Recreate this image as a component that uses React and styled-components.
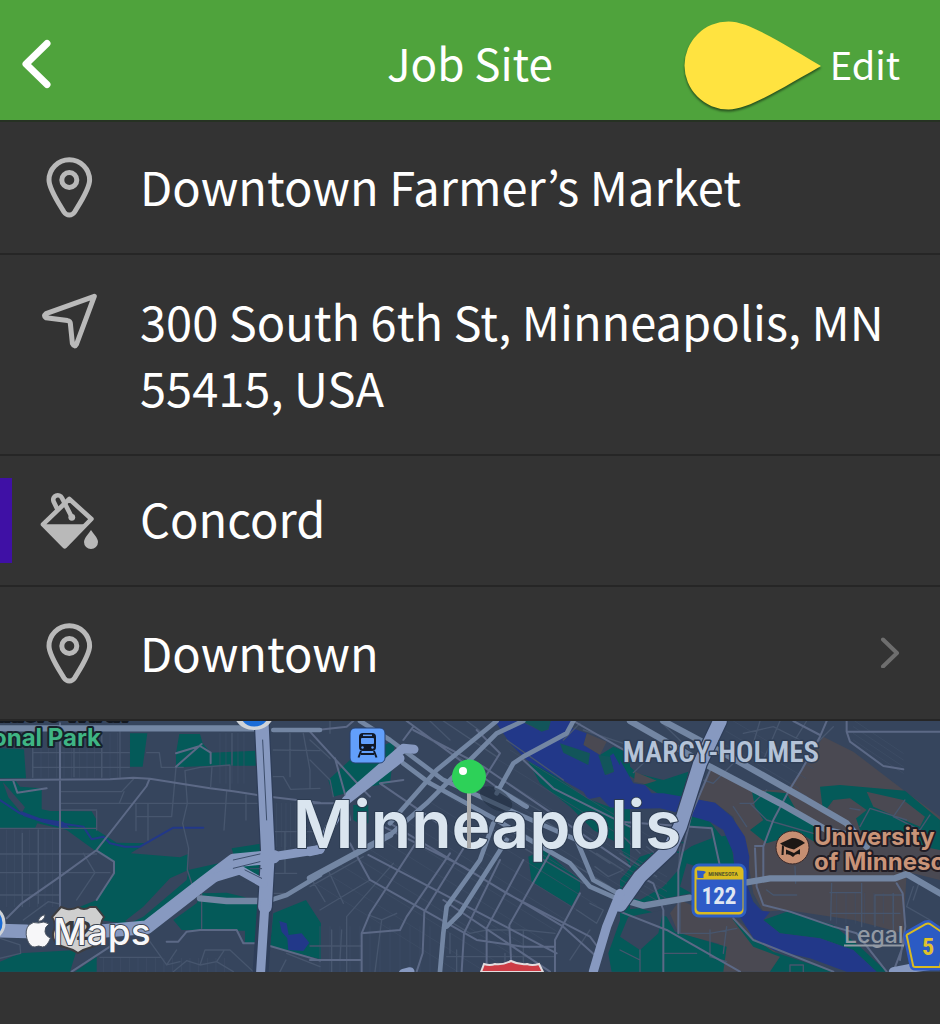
import React from "react";
import styled, { createGlobalStyle } from "styled-components";

const GlobalStyle = createGlobalStyle`
  * { box-sizing: border-box; }
  body {
    margin: 0;
    background: #333333;
    color: #ffffff;
    font-family: "Noto Sans CJK JP", "Noto Sans CJK SC", "Noto Sans", sans-serif;
  }
`;

const Screen = styled.main`
  min-height: 100vh;
  background: #333333;
`;

const Header = styled.header`
  display: grid;
  grid-template-columns: 1fr auto 1fr;
  align-items: center;
  height: 122px;
  padding: 8px 40px 0 20px;
  background: #4fa33c;
  border-bottom: 2px solid #263123;
`;

const Title = styled.h1`
  margin: 0 0 4px 20px;
  font-size: 44px;
  line-height: 64px;
  font-weight: 400;
`;

const HeaderButton = styled.button`
  display: flex;
  align-items: center;
  padding: 0;
  border: 0;
  background: none;
  color: inherit;
  font: inherit;
  font-size: 38px;
  line-height: 56px;
  cursor: pointer;
`;

const Actions = styled.div`
  display: flex;
  align-items: center;
  justify-content: flex-end;
  gap: 8px;
`;

const Marker = styled.svg`
  display: block;
  flex: none;
  margin-top: 4px;
  filter: drop-shadow(0 2px 1px rgba(0, 0, 0, 0.5));
`;

const List = styled.ul`
  margin: 0;
  padding: 0;
  list-style: none;
`;

const Row = styled.li`
  position: relative;
  display: flex;
  align-items: flex-start;
  padding: ${(p) => p.$top}px 40px 34px 37px;
  border-bottom: 2px solid #262626;
`;

const ColorTag = styled.span`
  position: absolute;
  left: 0;
  top: 22px;
  bottom: 22px;
  width: 12px;
  background: #3f10a5;
`;

const IconSlot = styled.span`
  display: flex;
  flex: none;
  align-items: center;
  width: 103px;
  height: 66px;
  color: #b9b9b9;
`;

const RowText = styled.span`
  flex: 1;
  font-size: 47px;
  line-height: 66px;
`;

const ChevronSlot = styled.span`
  display: flex;
  align-items: center;
  height: 66px;
`;

const MapFrame = styled.section`
  background: #36455d;
`;

const MapDrawing = styled.svg`
  display: block;
  width: 100%;
  height: auto;
`;

const MapText = styled.text`
  font-family: Inter, "Liberation Sans", sans-serif;
  font-size: ${(p) => p.$size}px;
  font-weight: ${(p) => p.$weight || 600};
  fill: ${(p) => p.$fill};
  stroke: ${(p) => p.$halo || "none"};
  stroke-width: ${(p) => p.$haloWidth || 0}px;
  stroke-linejoin: round;
  paint-order: stroke;
`;

const NarrowText = styled(MapText)`
  font-family: "Roboto Condensed", "Liberation Sans Narrow", "Liberation Sans", sans-serif;
`;

function PinIcon() {
  return (
    <svg width="64" height="64" viewBox="0 -1 64 64" fill="none" stroke="currentColor" strokeWidth="5" aria-hidden="true">
      <path d="M12 25A20.3 20.3 0 0 1 52.6 25C52.6 34 43 48 37.6 57C35 61 29.6 61 27 57C21.6 48 12 34 12 25Z" />
      <circle cx="32.3" cy="25" r="7.5" />
    </svg>
  );
}

function ArrowIcon() {
  return (
    <svg width="64" height="64" viewBox="0 0 64 64" fill="none" stroke="currentColor" strokeWidth="5" strokeLinejoin="round" aria-hidden="true">
      <path d="M57.3 7.3L9 24.6Q6 27 9 28.7L30.5 31.6Q33 32 33.3 34L35.4 54.5Q37.5 59 39.6 55Z" />
    </svg>
  );
}

function BucketIcon() {
  return (
    <svg width="64" height="66" viewBox="0 0 64 66" fill="none" stroke="currentColor" strokeWidth="4.6" strokeLinejoin="round" strokeLinecap="round" aria-hidden="true">
      <path d="M32.3 14L6 39.4L27.7 61.3L54.4 34Z" />
      <path d="M4.5 39.3H50L27.7 62.5Z" fill="currentColor" stroke="none" />
      <path d="M20 23.5L16.6 16.5C14.5 10.5 22.5 8 25 13L34.7 32" />
      <circle cx="34.8" cy="32.3" r="3.4" fill="currentColor" stroke="none" />
      <path d="M54 45C56 48.5 61 53 61 57A7 7 0 0 1 47 57C47 53 52 48.5 54 45Z" fill="currentColor" stroke="none" />
    </svg>
  );
}

// The map is charted in three side-by-side sheets drawn at three times scale.
const SHEETS = [0, 310, 620];

function parallels(x1, y1, x2, y2, dx, dy, count) {
  let d = "";
  for (let i = 0; i < count; i += 1) {
    d += `M${x1 + dx * i} ${y1 + dy * i}L${x2 + dx * i} ${y2 + dy * i}`;
  }
  return d;
}

const LAYERS = [
  {
    fill: "#4a4952",
    paths: [
      "",
      "",
      "M610 50L700 95L850 210L960 290V480L860 455L850 640L700 600L500 570L430 575L400 520L380 400L340 290L285 248L235 240L275 140L395 210L500 210L545 150ZM180 540L225 560L340 590L460 690L485 710L450 755H230L240 700L300 672L175 640L150 580Z",
    ],
  },
  {
    fill: "#045a59",
    paths: [
      "M0 85L72 88L78 175L0 175ZM390 40H442L428 140H390ZM538 42H600L608 70L632 98L768 92V137H632L528 142V100ZM0 183L45 180L60 200L125 205V268L150 273L275 274L290 300V330L350 368L440 370L392 400L540 412L565 402V450L655 430L620 470L460 610L400 615L300 600L240 560L290 540L342 460V425L290 395L200 330L112 310L105 325H0ZM695 385L790 370L800 480L720 470ZM605 520L680 518L730 530L780 550V670H735V632L600 630H545L520 600L590 550ZM820 580L918 540L963 610V718L810 680ZM0 725L60 700L230 690L210 755H0ZM225 755L290 710V755Z",
      "M55 180L120 120L235 70L255 65L240 190L175 200L70 230ZM130 255H175V310L150 312L130 300ZM650 115L740 170L830 235L900 262L960 268V440L925 370L850 330L780 260L690 190ZM870 105L910 80L960 100V190ZM655 410L700 390L810 480V510L785 558L665 485ZM945 560L960 555V755H905L895 700Z",
      "M0 90L20 130L50 160L130 180L205 155L185 235L120 225L75 195L0 150ZM395 210L500 220L540 290L600 320V375L540 340L440 370L390 330L430 300L405 260ZM600 200L660 195L855 212L960 300V390L860 370L720 330L700 270L640 240L610 280ZM0 480L60 410L150 380L185 400L240 360L330 345L350 480L200 430L180 500L215 520L0 560ZM215 260L270 305L320 370H170ZM0 570L60 565L140 590L165 635L320 680L310 755H0ZM335 595L400 655L460 695L640 755H450L480 710L400 680ZM430 600L500 575L640 615L720 680L800 755H770L700 690L600 655L480 640Z",
    ],
  },
  {
    fill: "#36455d",
    paths: [
      "M8 185L75 262L65 280L25 232ZM375 603L430 560L510 475L565 450L560 480L430 590L390 610ZM705 450L770 475L790 500L720 480Z",
      "",
      "M50 460L130 395L185 400L175 450L130 500L60 540L20 530ZM25 590L130 570L115 640L60 690L0 650ZM180 320H275V355L210 380L180 360Z",
    ],
  },
  {
    fill: "#4a4952",
    paths: [
      "",
      "M830 40L890 65L870 105L820 75ZM815 90L840 98L845 135L830 128Z",
      "M45 155L110 182L75 193L42 185ZM740 215L850 240L915 290L900 320L760 260ZM640 240L690 235L740 270L690 310L630 265Z",
    ],
  },
  {
    fill: "#223889",
    paths: [
      "M838 603L860 610L866 645L905 640L928 668L910 693L865 690L862 655L845 635ZM60 272L120 295L190 305L215 330L130 308L70 288Z",
      "M555 3H630L690 32L715 30L722 3H790L775 20L830 40L820 75L870 105L890 165L912 155L900 108L910 100L960 190V267L900 262L870 230L835 238L820 215L740 170L650 120L600 70Z",
      "M0 120L40 190L75 195L95 220L130 220L215 235L285 248L335 290L375 350L388 410L383 500L400 545L425 572L450 575L430 600L480 640L600 655L700 690L770 755H680L570 715L460 690L400 655L360 590L345 480L340 400L310 330L270 305L200 285L120 265L0 268Z",
    ],
  },
  {
    fill: "#12555a",
    paths: ["", "M635 3H722L715 28L695 35L670 20ZM750 70L840 100L835 135L760 98ZM865 105L900 110L912 155L885 165Z", ""],
  },
  {
    stroke: "#223889",
    width: 6,
    paths: ["M0 240L60 280L130 302L250 320L275 358L310 350L330 370L375 380H420L520 323H610", "", ""],
  },
  {
    stroke: "#3f4f67",
    width: 2,
    paths: [
      parallels(20, 330, 20, 560, 23, 0, 8) + parallels(100, 40, 100, 172, 23, 0, 12) + parallels(660, 40, 660, 190, 18, 0, 5) + parallels(830, 250, 830, 380, 14, 0, 9) + parallels(310, 715, 310, 755, 26, 0, 15),
      parallels(0, 480, 500, 790, 40, -26, 16) + parallels(30, 620, 30, 755, 30, 0, 12),
      parallels(340, 3, 580, 145, -22, 30, 3) + parallels(700, 60, 850, 160, 0, -20, 4) + parallels(0, 390, 140, 470, 0, 22, 5) + parallels(650, 520, 650, 610, 28, 0, 7),
    ],
  },
  {
    stroke: "#47566e",
    width: 4,
    paths: [
      "M98 40V172M222 40V170M305 30V172M360 30V172M98 98H388M98 142H388M440 98H478L484 142H550M528 142L515 290H408M408 250V332M444 250V360M555 152L562 250L548 310L566 385L562 450L575 490M555 152L600 142L690 135V210M636 140L632 200M696 40V135M182 250H780M182 215H365L400 178M358 250L372 215M182 270H290M290 274V330M820 170H850L872 208L960 205M870 40V170M910 40L930 150V205M820 90L960 92M0 325H290M0 402H290M0 458H330M67 340V560M115 330V550M0 525H180M250 400L285 458L230 540M0 655L60 675L62 700L0 715M70 600L145 545L180 552M605 520V625M680 215L672 330M738 225V300M855 335V460M820 335H960M820 460H890M820 520H870M450 665L500 735L540 725M500 735L530 690M300 712H480M520 755L560 722L600 735L650 725L700 755M600 735L615 690H690L760 755M650 725L672 692M858 720L840 755M960 740L860 700",
      "M0 120L60 180L70 230M0 60L60 115M60 3V40M400 3L560 110M330 40L460 120M420 60L360 3M590 60L760 180M470 3L520 40M560 200L740 300M0 470L45 545M50 440L100 550M0 500L160 410M30 570L180 480M110 755V590L250 430M65 630V755M0 678H155M90 720L95 630M215 600L195 755M175 585L215 600L260 580M430 610L480 640L530 630L640 630L735 640M640 630V755M410 710H735M585 700V755M420 640V700M440 755V690M800 570L860 610L880 570L840 550M780 720L840 630M760 60L810 10M820 30L940 70M500 300L820 490M640 340L900 500M700 300L900 430M860 400L940 450L895 470L855 440",
      "M370 40L460 20L540 60M420 3L400 70M480 3L430 120M560 3L500 100M590 70L640 20M300 90L560 230M340 130L280 190L250 180M340 260L380 320M360 250H400L440 210M390 250L440 300L580 340M440 510L460 525H530M527 490L525 440M635 490L632 600M725 490V620M765 525H850M765 525V620M820 520V630M630 518H725M635 580H840M40 158L80 120M120 3L210 90M0 400L110 470M80 380L130 420M0 340L60 400M180 540V640M175 460L180 380M320 620L310 700M270 630V710L320 725M180 640H270L350 625M60 690V755M130 700H230M0 690L60 720M510 755V735H550V755M855 240L820 290L860 310M930 285L900 330L860 310M750 265L720 320M750 265L860 300M720 270L690 265M860 560L930 600M880 500L860 560M900 480L880 540",
    ],
  },
  {
    stroke: "#5c6986",
    width: 6,
    paths: [
      "M180 10V560M0 180L330 178L400 173L450 176L630 205L700 214L790 228L960 248M448 178L440 198L290 390L180 470L65 550L20 595M528 140L605 72M528 100L600 78L632 98V130M40 183L52 218L140 205M290 392L342 425V460L290 540M215 755L330 680M500 665H535L560 635L600 630H710L730 670H780M800 675L960 722",
      "M0 32L110 20L130 3M0 35L160 210L180 230M75 115L110 240M0 250H70M155 755V640L270 630L290 590L420 400M155 640L180 580L330 350M240 310L760 620L860 710M120 370L180 480L500 660L640 680H735M175 405L740 700M320 755L338 700L343 575L470 370M400 540L720 755M455 755L462 640L570 420M530 755V625L640 420M605 755L598 615L720 400M735 755V660L810 520M220 320L460 440L590 520L840 650L870 690M310 30L520 140L960 440M280 180L210 190L400 320M290 3L640 260M500 30L570 100L520 180M790 3L960 100M640 120L730 205L960 320M310 20L280 60M120 300L110 240M0 720H155",
      "M680 3V35H960M680 35L690 65L790 138L850 148M0 305L275 325L298 430M275 140L215 280L175 450V640M620 3L600 50L545 150L505 215L460 300L430 380V480M405 385L410 500L430 555L510 575L640 620L710 640L800 755M430 378H405M80 480L100 490L130 570V755M55 480L110 445M0 575L140 630L360 755M340 595L400 660L640 755M830 490L848 520L856 620L840 720M520 3L600 45M820 755L860 650",
    ],
  },
  {
    stroke: "#7386a3",
    width: 14,
    paths: [
      "M820 538L860 525L960 465M820 30H960",
      "M0 475L240 345L350 250L480 120L560 40L640 3M150 3L240 60L400 180L620 280L800 360L850 480L960 540M280 130L360 190L560 300L660 360L780 430L840 500L930 540M790 3L770 40L640 110L610 130L560 220M550 310L510 420L410 560L400 640L390 755M590 360L450 580L410 620M240 310L380 150L560 3M560 205L650 260",
      "",
    ],
  },
  {
    stroke: "#7386a3",
    width: 19,
    paths: [
      "M600 535L680 543H790M0 25H790",
      "M0 475L240 345",
      "M30 3L270 140L480 250L620 330L690 345M130 3L330 110L560 240L680 310L740 380M30 545L70 557L210 533M380 487L450 475H825L860 462L960 520",
    ],
  },
  {
    stroke: "#2e3d58",
    width: 48,
    paths: ["M785 3L804 400L795 560L782 755", "", "M300 3L240 130L180 320L150 385L60 470L0 555"],
  },
  {
    stroke: "#8799c0",
    width: 41,
    paths: [
      "M785 3L804 400L795 560M0 632L80 634M300 634L440 622L610 490L700 422L820 410",
      "",
      "M300 3L240 130L180 320L150 385L60 470L0 555",
    ],
  },
  {
    stroke: "#8799c0",
    width: 27,
    paths: [
      "M620 480L720 450L790 490M790 25L800 250M795 550L782 755M820 410L960 388",
      "M0 395L30 388L60 320L110 240L270 115M120 225L280 85L312 88M930 520L890 620L850 755M300 755L280 760",
      "M820 755L870 745L940 735",
    ],
  },
  {
    stroke: "#3c4d6b",
    width: 3,
    paths: [
      "M700 420L780 402M700 445L780 425M735 450L785 475M750 446H785M788 60L800 300",
      "",
      "",
    ],
  },
];

function StreetMap() {
  return (
    <MapDrawing viewBox="0 0 940 251" role="img" aria-label="Map of Minneapolis">
      <rect width="940" height="251" fill="#36455d" />
      {LAYERS.map((layer, i) => (
        <g
          key={i}
          fill={layer.fill || "none"}
          stroke={layer.stroke || "none"}
          strokeWidth={layer.width}
          strokeLinejoin="round"
          strokeLinecap="round"
        >
          {layer.paths.map((d, n) => (
            <path key={n} d={d} transform={`translate(${SHEETS[n]} -1) scale(0.3333)`} />
          ))}
        </g>
      ))}

      <MapText x="-4" y="0" $size={23} $weight={700} $fill="#363c46" $halo="#131820" $haloWidth={4}>dacre Wirth</MapText>
      <MapText x="101" y="25" textAnchor="end" $size={24} $weight={700} $fill="#3fb584" $halo="#16222b" $haloWidth={4}>onal Park</MapText>

      <path d="M234 -6H274C272 4 263 9 254 9C245 9 236 4 234 -6Z" fill="#cfd3d8" />
      <path d="M240 -6H269C267 2 261 5.5 254 5.5C248 5.5 242 2 240 -6Z" fill="#1b6cd6" />
      <circle cx="-13" cy="202" r="17" fill="#1b6cd6" stroke="#cfd3d8" strokeWidth="3" />

      <rect x="350" y="7" width="35" height="35" rx="5" fill="#629ffb" stroke="#26416f" />
      <g fill="#101827">
        <rect x="359" y="12" width="17" height="18" rx="4" />
        <rect x="361" y="17" width="13" height="6" rx="1" fill="#629ffb" />
        <rect x="363" y="13.6" width="9" height="1.5" fill="#629ffb" />
        <circle cx="362.5" cy="26.5" r="1.2" fill="#629ffb" />
        <circle cx="372.5" cy="26.5" r="1.2" fill="#629ffb" />
        <path d="M361 30L358.5 36.5M374 30L376.5 36.5M361 33H374" stroke="#101827" strokeWidth="2" />
      </g>

      <path d="M481 251L484 243Q490 245 495 243Q503 244 511 240Q519 244 527 243Q532 245 539 243L543 251Z" fill="#cd3c45" stroke="#e3dcde" strokeWidth="2" />

      <NarrowText x="721" y="41" textAnchor="middle" $size={29} $weight={600} $fill="#b4c3d8" $halo="#2f3e56" $haloWidth={3}>MARCY-HOLMES</NarrowText>
      <ellipse cx="496" cy="78" rx="18" ry="10" fill="#1c293c" opacity="0.5" transform="rotate(32 496 78)" />
      <MapText x="487" y="127" textAnchor="middle" $size={66} $weight={600} $fill="#dae5ef" $halo="#2c3b51" $haloWidth={2}>Minneapolis</MapText>

      <rect x="467" y="72" width="4" height="55" fill="#a9a9a9" />
      <circle cx="469" cy="55.5" r="17" fill="#2dd158" />
      <circle cx="463" cy="50" r="4" fill="#ffffff" />

      <circle cx="792.5" cy="126.5" r="16.5" fill="#c68f72" stroke="#3b2a2a" />
      <g fill="#1b1715">
        <path d="M780 122.5L792 117Q799 117 805 122L794 128.5Q786 127 780 122.5Z" />
        <path d="M786 128.5L794 132L800 128V133.5Q796 132 793 136Q789 132.5 786 133.5Z" />
        <path d="M782 124L781.5 134H783.5L784 125.5Z" />
      </g>
      <MapText x="814" y="124" $size={24} $weight={700} $fill="#c99478" $halo="#211d25" $haloWidth={4}>University</MapText>
      <MapText x="814" y="149" $size={24} $weight={700} $fill="#c99478" $halo="#211d25" $haloWidth={4}>of Minnesota</MapText>

      <rect x="693" y="144" width="52" height="51" rx="6" fill="#dabb20" stroke="#2e5fc4" strokeWidth="3" />
      <path d="M696.5 158.500H742.500V187Q742.500 191 738 191H701Q696.500 191 696.500 187Z" fill="#2e5bc7" />
      <path d="M697 149.5L704 150L706 151L703.5 153.5V157H697.5Z" fill="#2e5bc7" />
      <NarrowText x="723" y="155" textAnchor="middle" $size={6} $weight={700} $fill="#55572a">MINNESOTA</NarrowText>
      <NarrowText x="719" y="183" textAnchor="middle" $size={23} $weight={700} $fill="#dfe6f2">122</NarrowText>

      <path d="M61 186L67 188Q73 189 78 186Q84 190 90 186L96 186L104 196Q99 203 102 212Q103 223 92 226Q84 228 78 232Q72 228 64 226Q52 223 53 212Q57 203 52 196Z" fill="#cfcfcf" stroke="#3d3d40" strokeWidth="2" />
      <MapText x="78" y="219" textAnchor="middle" $size={26} $weight={700} $fill="#38393c">12</MapText>

      <g fill="#f7f7f9" stroke="#4a5360" strokeWidth="1">
        <path d="M38.500 202Q44 199.500 49 203Q44.500 206 45 210.500Q45.500 215 50.500 217Q47 226 42.500 226Q38.500 224 35 226Q30 226.500 27 218Q24.500 209 29 204Q33 200 38.500 202Z" />
        <path d="M38.500 200.500Q38.500 195.500 45 193.500Q45 199.500 38.500 200.500Z" />
      </g>
      <MapText x="53" y="224" $size={37} $weight={500} $fill="#f7f7f9" $halo="#3e4653" $haloWidth={2}>Maps</MapText>

      <a href="#legal">
        <MapText x="844" y="222" $size={23} $weight={500} $fill="#9299a3">Legal</MapText>
        <path d="M844 224.500H904" stroke="#9299a3" strokeWidth="2" />
      </a>

      <path d="M925 201Q928 200 931 201L948 213L942 245Q941 248 938 248H915Q912 248 911 245L905 216Q904 213 907 211Z" fill="#2e5bc7" stroke="#2e5bc7" strokeWidth="3" />
      <path d="M926 203Q928 202 930 203L946 214L940 246H915Q913 246 913 244L907 216Q906 214 908 213Z" fill="#2b5bc4" stroke="#dabb20" strokeWidth="2" />
      <NarrowText x="928" y="234" textAnchor="middle" $size={24} $weight={700} $fill="#e0c12b">5</NarrowText>
    </MapDrawing>
  );
}

const DETAILS = [
  { text: "Downtown Farmer’s Market", Icon: PinIcon, top: 31 },
  { text: "300 South 6th St, Minneapolis, MN 55415, USA", Icon: ArrowIcon, top: 33 },
  { text: "Concord", Icon: BucketIcon, top: 29, tagged: true },
  { text: "Downtown", Icon: PinIcon, top: 32, opens: true },
];

export default function App() {
  return (
    <Screen>
      <GlobalStyle />
      <Header>
        <HeaderButton aria-label="Back">
          <svg width="32" height="52" viewBox="0 0 32 52" fill="none" stroke="#ffffff" strokeWidth="7" strokeLinecap="round" strokeLinejoin="round" aria-hidden="true">
            <path d="M27 5.5L6 26L27 46.5" />
          </svg>
        </HeaderButton>
        <Title>Job Site</Title>
        <Actions>
          <Marker width="138" height="90" viewBox="0 0 138 90" aria-hidden="true">
            <path d="M44.5 0.5A44 44 0 0 0 44.5 88.5C62 88.5 85 75 137 45C85 14 62 0.5 44.5 0.5Z" fill="#ffe340" />
          </Marker>
          <HeaderButton>Edit</HeaderButton>
        </Actions>
      </Header>
      <List>
        {DETAILS.map(({ text, Icon, top, tagged, opens }) => (
          <Row key={text} $top={top}>
            {tagged && <ColorTag />}
            <IconSlot>
              <Icon />
            </IconSlot>
            <RowText>{text}</RowText>
            {opens && (
              <ChevronSlot>
                <svg width="20" height="32" viewBox="0 0 20 32" fill="none" stroke="#6e6e6e" strokeWidth="4" strokeLinecap="round" strokeLinejoin="round" aria-hidden="true">
                  <path d="M3 3.5L17 17L3 30.5" />
                </svg>
              </ChevronSlot>
            )}
          </Row>
        ))}
      </List>
      <MapFrame>
        <StreetMap />
      </MapFrame>
    </Screen>
  );
}
